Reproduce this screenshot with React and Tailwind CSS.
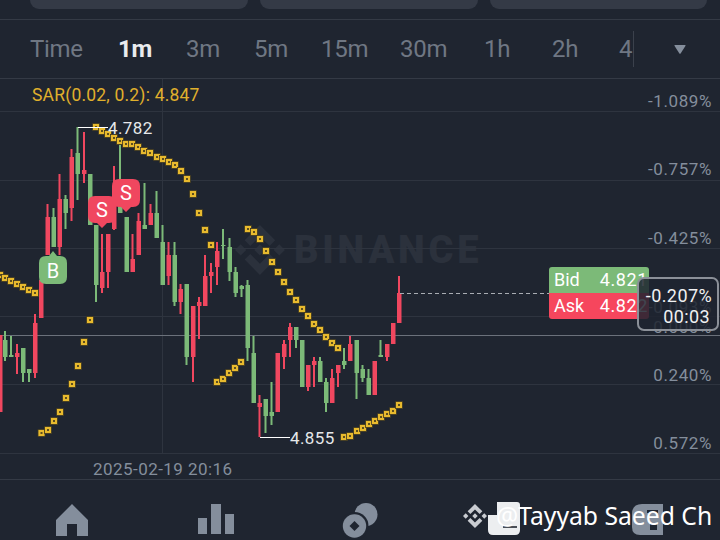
const GREEN = "#7cba78";
const RED = "#f0475f";
const GRAY = "#848e9c";

// x, wick top, wick bottom, body top, body bottom, up?
const CANDLES = [
  [0, 335, 412, 335, 412, 0], [5, 331, 361, 340, 357, 1], [11, 336, 357, 355, 357, 1], [17, 344, 374, 353, 357, 0],
  [23, 348, 382, 348, 373, 1], [29, 369, 382, 369, 373, 1], [35, 314, 378, 323, 373, 0], [41, 280, 318, 280, 318, 0],
  [47.5, 204, 255, 217, 255, 0], [53.5, 208, 247, 217, 247, 1], [59.5, 174, 255, 199, 247, 0], [65.5, 195, 229, 199, 213, 1],
  [71.5, 149, 221, 157, 208, 0], [77.5, 127, 200, 153, 174, 1], [84, 132, 183, 170, 174, 0], [90, 174, 225, 174, 225, 1],
  [96, 225, 302, 225, 285, 1], [102, 234, 293, 272, 288, 0], [108, 234, 288, 234, 272, 0], [114, 166, 230, 200, 229, 0],
  [120, 145, 213, 200, 213, 1], [126.5, 217, 272, 217, 272, 1], [132.5, 234, 272, 259, 272, 0], [138.5, 213, 255, 221, 255, 0],
  [144.5, 183, 229, 225, 229, 1], [150.5, 204, 225, 213, 225, 0], [156.5, 191, 238, 213, 238, 1], [162.5, 225, 285, 242, 285, 1],
  [168.5, 242, 285, 255, 276, 0], [174.5, 242, 306, 255, 302, 1], [180.5, 284, 314, 289, 302, 0], [186.5, 284, 365, 284, 357, 1],
  [193, 306, 382, 306, 357, 0], [199, 297, 339, 302, 306, 0], [205, 255, 306, 276, 306, 0], [211, 263, 293, 272, 276, 0],
  [217, 242, 285, 251, 267, 0], [223, 229, 259, 245, 246, 1], [229.5, 238, 281, 247, 272, 1], [235.5, 267, 297, 272, 293, 1],
  [241.5, 285, 297, 286, 289, 1], [247.5, 280, 361, 285, 348, 1], [253.5, 336, 403, 353, 403, 1], [259.5, 395, 437, 403, 407, 0],
  [265.5, 399, 433, 399, 416, 1], [271.5, 382, 425, 412, 416, 1], [277.5, 353, 412, 353, 412, 0], [284, 340, 369, 344, 357, 0],
  [290, 323, 357, 327, 340, 0], [296, 327, 348, 327, 340, 1], [302, 340, 387, 340, 387, 1], [308, 365, 391, 365, 387, 0],
  [314, 357, 387, 361, 365, 0], [320, 357, 382, 361, 382, 1], [326, 378, 412, 382, 403, 1], [332, 369, 403, 378, 403, 0],
  [338, 365, 387, 365, 373, 0], [344, 348, 369, 361, 365, 1], [350, 336, 361, 344, 361, 0], [356.5, 340, 399, 340, 373, 1],
  [362.5, 365, 382, 369, 378, 1], [368.5, 369, 395, 378, 395, 1], [374.5, 361, 395, 361, 395, 0], [380.5, 340, 357, 355, 357, 1],
  [387, 344, 361, 344, 357, 0], [393, 323, 344, 323, 344, 0], [399, 276, 323, 293, 323, 0],
];

const SAR = [
  [0, 275], [5, 278], [11, 281], [17, 284], [23, 287], [29, 290], [35, 293],
  [41.5, 433], [48, 430], [54, 421], [60, 412], [66, 398], [72, 384], [78, 366], [84, 342], [90, 320],
  [96, 127], [102, 131], [108, 134], [114, 138], [120, 141], [126, 144], [132, 144], [138, 147], [144, 151], [150, 153],
  [157, 157], [163, 159], [169, 162], [175, 165], [181, 171], [187, 179], [193, 194], [199, 213], [205, 230], [211, 245],
  [217, 382], [223, 379], [229, 373], [235, 368], [241, 362],
  [248, 229], [254, 232], [260, 239], [266, 251], [272, 262], [278, 272], [284, 282], [290, 292], [296, 300], [302, 309],
  [308, 316], [314, 324], [320, 330], [326, 337], [332, 343], [338, 348],
  [344, 437], [350, 436], [357, 431], [363, 428], [369, 424], [375, 421], [381, 417], [387, 414], [393, 411], [399, 405],
];

const GRID_Y = [111, 180, 248, 316, 384, 453];
// the two middle labels sit behind the price tag, as in the app
const AXIS = [
  ["-1.089%", 107], ["-0.757%", 175], ["-0.425%", 244], ["-0.093%", 313], ["0.000%", 333], ["0.240%", 381], ["0.572%", 449],
];
const TABS = [
  ["Time", "w-[88px]"], ["1m", "w-[68px] font-bold text-[#eaecef]"], ["3m", "w-[68px]"], ["5m", "w-[67px]"],
  ["15m", "w-[79px]"], ["30m", "w-[84px]"], ["1h", "w-[68px]"], ["2h", "w-[67px]"], ["4", "w-[14px]"],
];

const LOGO =
  "M16.624 13.9202l2.7175 2.7154-7.353 7.3513-7.353-7.3513 2.7175-2.7154 4.6355 4.6595 4.6356-4.6595zm4.6366-4.6366L24 12l-2.7154 2.7164L18.5682 12l2.6924-2.7164zm-9.272.001l2.7163 2.6914-2.7164 2.7174v-.001L9.2721 12l2.7164-2.7154zm-9.2722-.001L5.4088 12l-2.6914 2.6924L0 12l2.7164-2.7164zM11.9885.0115l7.353 7.329-2.7174 2.7154-4.6356-4.6356-4.6355 4.6595-2.7174-2.7154 7.353-7.353z";

function Chart() {
  return (
    <svg viewBox="0 79 720 400" className="block w-[720px] h-[400px]">
      {/* watermark */}
      <path d={LOGO} transform="translate(235 225) scale(2.08)" fill="#2b313c" />
      <text x="294" y="263" fontSize="38" fontWeight="900" letterSpacing="3.8" fill="#2b313c">BINANCE</text>

      {GRID_Y.map((y) => (
        <line key={y} x1="0" x2="720" y1={y + 0.5} y2={y + 0.5} stroke="#2e343f" strokeWidth="1" />
      ))}
      <line x1="162.5" x2="162.5" y1="79" y2="453" stroke="#2e343f" />
      <line x1="0" x2="720" y1="335.5" y2="335.5" stroke="#6b717b" />

      {CANDLES.map(([x, wt, wb, bt, bb, up]) => (
        <g key={x} fill={up ? GREEN : RED}>
          <rect x={x - 1} y={wt} width="2" height={wb - wt} />
          <rect x={x - 2} y={bt} width="4.5" height={bb - bt} />
        </g>
      ))}

      {SAR.map(([x, y]) => (
        <g key={x}>
          <rect x={x - 3.5} y={y - 3.5} width="7" height="7" fill="#e8ba2e" stroke="#3b3622" strokeWidth="0.8" />
          <rect x={x - 1} y={y - 1} width="2" height="2" fill="#5e4f1f" />
        </g>
      ))}

      {/* buy / sell flags */}
      <path d="M46 256 L49 256 L53 251 L57 256 L60 256 Q67 256 67 263 L67 277 Q67 284 60 284 L46 284 Q39 284 39 277 L39 263 Q39 256 46 256 Z" fill={GREEN} />
      <text x="53" y="278" fontSize="20" textAnchor="middle" fill="#fff">B</text>
      <path d="M95 196 L109 196 Q116 196 116 203 L116 216 Q116 223 109 223 L107 223 L102 228 L97 223 L95 223 Q88 223 88 216 L88 203 Q88 196 95 196 Z" fill={RED} />
      <text x="102" y="217" fontSize="20" textAnchor="middle" fill="#fff">S</text>
      <path d="M119 179 L133 179 Q140 179 140 186 L140 200 Q140 207 133 207 L131 207 L126 212 L121 207 L119 207 Q112 207 112 200 L112 186 Q112 179 119 179 Z" fill={RED} />
      <text x="126" y="200" fontSize="20" textAnchor="middle" fill="#fff">S</text>

      {/* high / low */}
      <line x1="78" x2="108" y1="127.5" y2="127.5" stroke="#fff" />
      <text x="108" y="134" fontSize="17" letterSpacing="0.4" fill="#e6e8ea">4.782</text>
      <line x1="260" x2="290" y1="437.5" y2="437.5" stroke="#fff" />
      <text x="290" y="444" fontSize="17" letterSpacing="0.4" fill="#e6e8ea">4.855</text>

      <text x="32" y="101" fontSize="17.5" letterSpacing="0.2" fill="#e0b02c">SAR(0.02, 0.2): 4.847</text>
      {AXIS.map(([label, y]) => (
        <text key={label} x="712" y={y} fontSize="17" letterSpacing="0.6" textAnchor="end" fill={GRAY}>{label}</text>
      ))}
      <text x="93" y="475" fontSize="17" letterSpacing="0.45" fill={GRAY}>2025-02-19 20:16</text>

      <line x1="400" x2="550" y1="293.5" y2="293.5" stroke="#a9adb3" strokeDasharray="4 3" />
    </svg>
  );
}

function PriceTag() {
  return (
    <>
      <div className="absolute left-[549px] top-[188px] w-[100px] h-[52px] rounded-[3px] overflow-hidden text-[18px] text-white leading-none">
        <div className="h-[26px] bg-[#7cba78] flex items-center justify-between pl-[5px] pr-[1px]">
          <span>Bid</span>
          <span className="tracking-[0.6px]">4.821</span>
        </div>
        <div className="h-[26px] bg-[#f6465d] flex items-center justify-between pl-[5px] pr-[1px]">
          <span>Ask</span>
          <span className="tracking-[0.6px]">4.822</span>
        </div>
      </div>
      <div className="absolute left-[637px] top-[198px] w-[82px] h-[54px] rounded-[7px] border-2 border-[#8b9098] bg-[#1f2530]/85 flex flex-col items-end pt-[6px] pr-[5px] text-[#f0f1f2] text-[18px] leading-[21px] tracking-[0.4px]">
        <span>-0.207%</span>
        <span className="pr-[2px]">00:03</span>
      </div>
    </>
  );
}

function BottomNav() {
  return (
    <div className="relative h-[60px] overflow-hidden">
      <svg viewBox="0 480 720 60" className="block w-[720px] h-[60px]">
        <path d="M72 504 L88 520 L88 536 L77 536 L77 524 L67 524 L67 536 L56 536 L56 520 Z" fill={GRAY} />
        <path d="M198 518h9v16h-9z M211 504h10v30h-10z M225 514h9v20h-9z" fill={GRAY} />
        <circle cx="366" cy="514.5" r="11.5" fill={GRAY} />
        <circle cx="354.5" cy="526" r="14" fill="#1f2530" />
        <circle cx="354.5" cy="526" r="11.7" fill={GRAY} />
        <path d="M354.5 521 L359.5 526 L354.5 531 L349.5 526 Z" fill="#1f2530" />

        <path d={LOGO} transform="translate(463 504)" fill="#c9ccd1" />
        <path d="M497 502 H517 Q520 502 520 505 V530 Q520 535 515 535 H493 Q488 535 488 530 V515 H497 Z" fill="#eceef0" />
        <path d="M503 527 H517" stroke="#4a4f58" strokeWidth="2" />
        <path d="M642 504 H663 V535 H640 Q632 535 632 527 V514 Q632 504 642 504 Z" fill={GRAY} />
        <path d="M647 510h11v3h-11z M650 523h7v7h-7z" fill="#1f2530" />
      </svg>
      <span className="absolute left-[496px] top-[18px] text-[24.7px] leading-[36px] text-white font-['Noto_Sans',sans-serif] whitespace-nowrap">
        @Tayyab Saeed Ch
      </span>
    </div>
  );
}

export default function App() {
  return (
    <div className="relative w-[720px] h-[540px] overflow-hidden bg-[#1f2530] font-['Roboto',sans-serif]">
      <div className="flex gap-[12px] pl-[30px] h-[19px] border-b border-[#343a45] box-content">
        <div className="w-[218px] h-[9px] rounded-b-[10px] bg-[#343a46]" />
        <div className="w-[218px] h-[9px] rounded-b-[10px] bg-[#343a46]" />
        <div className="w-[217px] h-[9px] rounded-b-[10px] bg-[#343a46]" />
      </div>

      <div className="flex items-center h-[58px] border-b border-[#343a45] box-content">
        <div className="w-[634px] h-[36px] flex items-center pl-[30px] overflow-hidden border-r border-[#3b414c] text-[24px] tracking-[-0.3px] text-[#6f7783] whitespace-nowrap">
          {TABS.map(([tab, cls]) => (
            <span key={tab} className={`shrink-0 ${cls}`}>{tab}</span>
          ))}
        </div>
        <svg viewBox="0 0 12 9" className="ml-[40px] w-[12px] h-[9px]">
          <path d="M1 0 H11 Q12 0 11.4 1 L6.6 8.4 Q6 9 5.4 8.4 L0.6 1 Q0 0 1 0 Z" fill={GRAY} />
        </svg>
      </div>

      <div className="relative h-[400px] border-b border-[#343a45] box-content">
        <Chart />
        <PriceTag />
      </div>

      <BottomNav />
    </div>
  );
}
